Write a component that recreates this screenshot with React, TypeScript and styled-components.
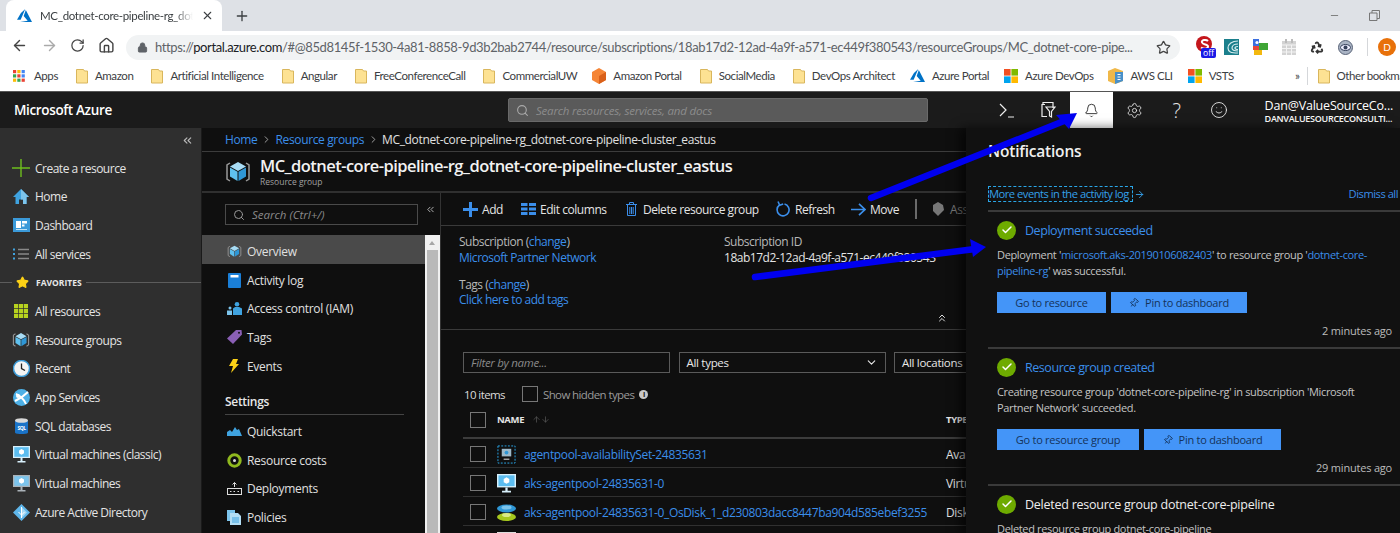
import React from 'react';
import styled, { createGlobalStyle } from 'styled-components';
import {
  ArrowLeft, ArrowRight, RotateCw, Home, Star, Lock, Plus, X, Minus, Search, Bell, Settings, Smile,
  ChevronDown, ChevronsLeft, ChevronsUp, Pin, ChevronRight, Check, ArrowUp, ArrowDown,
} from 'lucide-react';

const GlobalStyle = createGlobalStyle`
  html, body { margin: 0; padding: 0; background: #111; }
  body { font-family: "Open Sans", "Liberation Sans", sans-serif; }
  #root { width: 1400px; height: 533px; overflow: hidden; }
  * { box-sizing: border-box; }
`;

const Page = styled.div`
  width: 1400px;
  height: 533px;
  position: relative;
  overflow: hidden;
  display: flex;
  flex-direction: column;
`;

/* ---------- browser chrome ---------- */

const TabStrip = styled.div`
  height: 31px;
  background: #dee1e6;
  display: flex;
  align-items: flex-end;
  padding-left: 6px;
  color: #5f6368;
  font-family: Lato, sans-serif;
`;

const Tab = styled.div`
  width: 216px;
  height: 31px;
  background: #fff;
  border-radius: 8px 8px 0 0;
  display: flex;
  align-items: center;
  padding: 0 8px 0 11px;
  gap: 8px;
  color: #3c4043;
  font-size: 11.5px;
  letter-spacing: -0.33px;
  & > svg { flex: none; }
`;

const TabTitle = styled.span`
  flex: 1;
  white-space: nowrap;
  overflow: hidden;
  mask-image: linear-gradient(to right, #000 88%, transparent);
`;

const NewTab = styled.div`
  margin-left: 12px;
  height: 31px;
  display: flex;
  align-items: center;
  color: #3c4043;
`;

const WindowControls = styled.div`
  margin-left: auto;
  height: 31px;
  display: flex;
  align-items: center;
  gap: 29px;
  padding-right: 20px;
  color: #777;
`;

const Toolbar = styled.div`
  height: 29px;
  background: #fff;
  display: flex;
  align-items: center;
  color: #5f6368;
  font-family: Lato, sans-serif;
`;

const NavButtons = styled.div`
  width: 126px;
  flex: none;
  padding-left: 11px;
  display: flex;
  align-items: center;
  gap: 12.5px;
`;

const AddressBar = styled.div`
  width: 1054px;
  flex: none;
  height: 25px;
  margin-top: 3px;
  background: #f1f3f4;
  border-radius: 13px;
  display: flex;
  align-items: center;
  padding: 0 9px 0 11px;
  gap: 7px;
  & > svg { flex: none; }
`;

const Url = styled.div`
  flex: 1;
  min-width: 0;
  font-size: 13px;
  letter-spacing: -0.37px;
  white-space: nowrap;
  overflow: hidden;
  color: #5f6368;
  & > b {
    font-weight: 400;
    color: #202124;
  }
`;

const Extensions = styled.div`
  flex: 1;
  display: flex;
  align-items: center;
  padding-left: 15px;
  gap: 14px;
  margin-top: 3px;
  & > svg { flex: none; }
  & > svg:first-child { margin-right: -6px; }
`;

const ExtDivider = styled.div`
  width: 1px;
  height: 18px;
  background: #d5d7da;
`;

const Avatar = styled.div`
  width: 18px;
  height: 18px;
  border-radius: 50%;
  background: #e8710a;
  color: #fff;
  font-size: 10px;
  display: flex;
  align-items: center;
  justify-content: center;
  margin-left: -4px;
  flex: none;
`;

const Bookmarks = styled.div`
  height: 32px;
  background: #fff;
  border-bottom: 1px solid #555;
  display: flex;
  align-items: center;
  padding-left: 13px;
  gap: 15px;
  font-family: Lato, sans-serif;
  font-size: 11.5px;
  letter-spacing: -0.42px;
  color: #3c4043;
`;

const Bookmark = styled.div<{ $gap?: number }>`
  display: flex;
  align-items: center;
  gap: ${(p) => p.$gap || 7}px;
  white-space: nowrap;
  flex: none;
  & > svg { flex: none; }
`;

const BookmarkEnd = styled.div`
  margin-left: auto;
  display: flex;
  align-items: center;
  gap: 7px;
  white-space: nowrap;
  width: 105px;
  overflow: hidden;
  flex: none;
`;

const BookmarkDivider = styled.div`
  width: 1px;
  height: 18px;
  flex: none;
  background: #d5d7da;
`;

const FolderMark = styled.svg`
  margin-left: 3px;
`;

/* ---------- portal header ---------- */

const PortalHeader = styled.header`
  height: 36px;
  background: #1b1b1b;
  color: #fff;
  display: flex;
  align-items: center;
`;

const Brand = styled.div`
  width: 508px;
  padding-left: 14px;
  font-size: 13.5px;
  font-weight: 600;
  letter-spacing: -0.35px;
`;

const GlobalSearch = styled.div`
  width: 420px;
  height: 24px;
  background: #5a5a5a;
  border: 1px solid #6a6a6a;
  border-radius: 2px;
  display: flex;
  align-items: center;
  padding-left: 7px;
  gap: 7px;
  color: #8c8c8c;
  font-size: 11.5px;
  font-style: italic;
  letter-spacing: -0.2px;
`;

const HeaderIcons = styled.div`
  margin-left: 57px;
  display: flex;
`;

const HeaderButton = styled.div<{ $active?: boolean }>`
  width: 42.6px;
  height: 36px;
  display: flex;
  align-items: center;
  justify-content: center;
  background: ${(p) => (p.$active ? '#fff' : 'transparent')};
  color: ${(p) => (p.$active ? '#222' : '#e6e6e6')};
  font-size: 20px;
  font-weight: 300;
`;

const UserBox = styled.div`
  margin-left: 24px;
  padding-top: 2px;
  display: flex;
  flex-direction: column;
  white-space: nowrap;
`;

const UserName = styled.div`
  font-size: 12.5px;
  line-height: 15px;
  letter-spacing: -0.2px;
`;

const UserDir = styled.div`
  font-size: 9px;
  line-height: 12px;
  font-weight: 600;
  letter-spacing: -0.28px;
`;

/* ---------- portal body ---------- */

const PortalBody = styled.div`
  flex: 1;
  min-height: 0;
  display: flex;
  background: #0f0f0f;
`;

const Sidebar = styled.nav`
  width: 202px;
  flex: none;
  background: #2f2f2f;
  color: #e4e4e4;
  border-right: 1px solid #1a1a1a;
`;

const CollapseRow = styled.div`
  height: 25.7px;
  display: flex;
  align-items: center;
  justify-content: flex-end;
  padding-right: 7px;
  color: #bbb;
`;

const NavItem = styled.div`
  height: 28.7px;
  display: flex;
  align-items: center;
  padding-left: 12px;
  gap: 5px;
  font-size: 12px;
  letter-spacing: -0.5px;
  white-space: nowrap;
`;

const NavIcon = styled.span`
  width: 18px;
  height: 18px;
  flex: none;
  display: flex;
  align-items: center;
  justify-content: center;
`;

const FavRow = styled.div`
  height: 28.7px;
  display: flex;
  align-items: center;
  gap: 4px;
  font-size: 8.5px;
  font-weight: 700;
  letter-spacing: 0;
  color: #e8e8e8;
  & > span:nth-of-type(2) { margin-left: 3px; }
`;

const FavLine = styled.span<{ $w?: number }>`
  height: 1px;
  background: #5c5c5c;
  ${(p) => (p.$w ? `width: ${p.$w}px;` : 'flex: 1;')}
`;

const Main = styled.main`
  flex: 1;
  min-width: 0;
  display: flex;
  flex-direction: column;
  overflow: hidden;
`;

const Breadcrumb = styled.div`
  height: 24px;
  flex: none;
  display: flex;
  align-items: center;
  padding-left: 23px;
  gap: 3.5px;
  font-size: 12px;
  letter-spacing: -0.36px;
  white-space: nowrap;
  color: #e0e0e0;
  border-bottom: 1px solid #3c3c3c;
  & > a { color: #3b8eea; }
  & > svg { color: #aaa; flex: none; }
`;

const ResourceHeader = styled.div`
  height: 41px;
  flex: none;
  display: flex;
  align-items: center;
  padding-left: 23px;
  gap: 9px;
  border-bottom: 2px solid #303030;
`;

const ResourceTitle = styled.div`
  font-size: 16.5px;
  line-height: 20px;
  font-weight: 600;
  letter-spacing: -0.54px;
  color: #f2f2f2;
  white-space: nowrap;
`;

const ResourceSub = styled.div`
  font-size: 8.5px;
  line-height: 11px;
  color: #a0a0a0;
`;

const BladeRow = styled.div`
  flex: 1;
  min-height: 0;
  display: flex;
`;

const BladeMenu = styled.div`
  width: 239px;
  flex: none;
  display: flex;
  flex-direction: column;
  border-right: 1px solid #333;
`;

const BladeSearchRow = styled.div`
  height: 42px;
  flex: none;
  display: flex;
  align-items: flex-start;
  padding: 11px 0 0 23px;
  gap: 7px;
  color: #bbb;
`;

const BladeSearch = styled.div`
  width: 193px;
  height: 21px;
  border: 1px solid #4a4a4a;
  display: flex;
  align-items: center;
  padding-left: 7px;
  gap: 7px;
  font-size: 11.5px;
  font-style: italic;
  letter-spacing: 0;
  color: #8a8a8a;
`;

const BladeScrollArea = styled.div`
  flex: 1;
  min-height: 0;
  display: flex;
`;

const BladeList = styled.div`
  width: 223px;
  flex: none;
`;

const Scrollbar = styled.div`
  flex: 1;
  background: #f0f0f0;
  padding: 15px 2px 0 2px;
  position: relative;
  &::before {
    content: '';
    position: absolute;
    left: 4px;
    top: 6px;
    border: 3.5px solid transparent;
    border-top: 0;
    border-bottom: 4px solid #a6a6a6;
  }
  & > div {
    height: 100%;
    background: #b9b9b9;
  }
`;

const BladeItem = styled.div<{ $selected?: boolean }>`
  height: 28.7px;
  display: flex;
  align-items: center;
  padding: 4px 0 0 23px;
  gap: 4px;
  font-size: 12px;
  letter-spacing: -0.3px;
  color: #e0e0e0;
  background: ${(p) => (p.$selected ? '#4a4a4a' : 'transparent')};
`;

const BladeHeading = styled.div`
  height: 29.7px;
  margin: 7px 21px 0 23px;
  display: flex;
  align-items: center;
  font-size: 12px;
  font-weight: 600;
  letter-spacing: -0.3px;
  color: #e8e8e8;
  border-bottom: 1px solid #444;
  padding-top: 3px;
`;

const Content = styled.div`
  flex: 1;
  min-width: 0;
  display: flex;
  flex-direction: column;
  overflow: hidden;
`;

const CommandBar = styled.div`
  height: 33px;
  flex: none;
  display: flex;
  align-items: center;
  padding-left: 22px;
  border-bottom: 1px solid #3a3a3a;
  white-space: nowrap;
`;

const Command = styled.div<{ $w: number; $muted?: boolean; $gap?: number }>`
  width: ${(p) => p.$w}px;
  flex: none;
  display: flex;
  align-items: center;
  gap: ${(p) => p.$gap || 4}px;
  font-size: 12px;
  letter-spacing: -0.45px;
  color: ${(p) => (p.$muted ? '#777' : '#e4e4e4')};
  & > svg { flex: none; }
`;

const CommandSep = styled.div`
  width: 2px;
  height: 20px;
  background: #6a6a6a;
  margin-right: 15px;
  flex: none;
`;

const Essentials = styled.div`
  height: 104px;
  flex: none;
  padding: 8px 0 0 18px;
  border-bottom: 1px solid #3a3a3a;
  position: relative;
  display: grid;
  grid-template-columns: 265px 1fr;
  grid-template-rows: 42.5px auto;
  font-size: 12px;
  line-height: 15.5px;
  letter-spacing: -0.48px;
  color: #b8b8b8;
  & a { color: #3b8eea; }
  & strong { font-weight: 400; color: #e4e4e4; white-space: nowrap; }
`;

const EssentialsToggle = styled.div`
  position: absolute;
  right: 18px;
  bottom: 2px;
  color: #ddd;
`;

const FilterRow = styled.div`
  margin: 22px 0 0 22px;
  display: flex;
  gap: 8.5px;
  flex: none;
`;

const FilterBox = styled.div<{ $italic?: boolean }>`
  width: 207px;
  height: 21px;
  flex: none;
  border: 1px solid #5a5a5a;
  display: flex;
  align-items: center;
  justify-content: space-between;
  padding: 0 7px;
  font-size: 11.5px;
  letter-spacing: -0.3px;
  font-style: ${(p) => (p.$italic ? 'italic' : 'normal')};
  color: ${(p) => (p.$italic ? '#8a8a8a' : '#e8e8e8')};
`;

const CountRow = styled.div`
  margin: 12px 0 0 23px;
  height: 18px;
  flex: none;
  display: flex;
  align-items: center;
  font-size: 11.5px;
  letter-spacing: -0.6px;
  color: #dcdcdc;
`;

const Box = styled.span<{ $size?: number }>`
  width: ${(p) => p.$size || 16}px;
  height: ${(p) => p.$size || 16}px;
  flex: none;
  display: block;
  border: 1px solid #777;
`;

const HiddenTypes = styled.div`
  margin-left: 17px;
  display: flex;
  align-items: center;
  gap: 5px;
  color: #9a9a9a;
`;

const InfoDot = styled.span`
  width: 9px;
  height: 9px;
  border-radius: 50%;
  background: #c8c8c8;
  color: #111;
  font-size: 7.5px;
  font-weight: 700;
  line-height: 9px;
  text-align: center;
`;

const Table = styled.div`
  margin: 1px 0 0 22px;
  flex: none;
`;

const TableRow = styled.div<{ $head?: boolean }>`
  height: ${(p) => (p.$head ? 35 : 29)}px;
  display: grid;
  grid-template-columns: 27px 449px 60px;
  align-items: center;
  padding: ${(p) => (p.$head ? '0 0 2px 7px' : '2px 0 0 7px')};
  border-bottom: 1px solid ${(p) => (p.$head ? '#3c3c3c' : '#303030')};
  border-bottom-width: ${(p) => (p.$head ? 2 : 1)}px;
  font-size: 12px;
  letter-spacing: -0.35px;
  color: #e0e0e0;
  white-space: nowrap;
`;

const HeadCell = styled.div`
  display: flex;
  align-items: center;
  gap: 8px;
  font-size: 9.5px;
  font-weight: 700;
  color: #e4e4e4;
`;

const SortArrows = styled.span`
  display: flex;
`;

const NameCell = styled.div`
  display: flex;
  align-items: center;
  gap: 8px;
  color: #3b8eea;
  & > svg { flex: none; }
`;

/* ---------- notifications ---------- */

const NotificationPanel = styled.aside`
  width: 434px;
  flex: none;
  background: #111;
  box-shadow: -6px 0 10px rgba(0, 0, 0, 0.6);
  padding-left: 22px;
  position: relative;
  overflow: hidden;
`;

const PanelTitle = styled.h2`
  margin: 0;
  height: 46px;
  display: flex;
  align-items: center;
  font-size: 15.5px;
  font-weight: 600;
  letter-spacing: -0.2px;
  color: #f0f0f0;
`;

const PanelLinks = styled.div`
  margin-top: 12px;
  height: 24px;
  display: flex;
  align-items: flex-start;
  justify-content: space-between;
  font-size: 11.2px;
  letter-spacing: -0.5px;
  color: #3b8eea;
`;

const ActivityLink = styled.div`
  display: flex;
  align-items: center;
  color: #34a0ea;
  gap: 1px;
  & > span {
    border: 1px dashed #2aa6e8;
    height: 16px;
    width: 145px;
    line-height: 14px;
    white-space: nowrap;
  }
`;

const PanelDismiss = styled.span`
  padding-right: 2px;
  line-height: 16px;
  white-space: nowrap;
`;

const Notice = styled.div<{ $last?: boolean }>`
  height: ${(p) => (p.$last ? 60 : 137)}px;
  border-top: 2px solid #3a3a3a;
  padding: 9px 8px 0 9px;
`;

const NoticeHead = styled.div<{ $plain?: boolean }>`
  height: 18px;
  display: flex;
  align-items: center;
  gap: 9px;
  font-size: 12.5px;
  letter-spacing: ${(p) => (p.$plain ? -0.25 : -0.45)}px;
  color: ${(p) => (p.$plain ? '#eee' : '#3b8eea')};
  white-space: nowrap;
`;

const GreenTick = styled.span`
  width: 19px;
  height: 19px;
  flex: none;
  border-radius: 50%;
  background: #6eab00;
  color: #fff;
  display: flex;
  align-items: center;
  justify-content: center;
`;

const NoticeBody = styled.div`
  margin-top: 8px;
  font-size: 11px;
  line-height: 16px;
  letter-spacing: -0.34px;
  color: #c4c4c4;
  white-space: nowrap;
  & > a { color: #3b8eea; }
`;

const NoticeActions = styled.div`
  margin-top: 13px;
  display: flex;
  gap: 5px;
`;

const ActionButton = styled.div<{ $w: number }>`
  width: ${(p) => p.$w}px;
  height: 21px;
  background: #4495f8;
  color: #14335a;
  font-size: 11px;
  letter-spacing: -0.25px;
  display: flex;
  align-items: center;
  justify-content: center;
  gap: 6px;
  white-space: nowrap;
  & > svg { transform: rotate(40deg); }
`;

const NoticeTime = styled.div`
  margin-top: 10px;
  text-align: right;
  font-size: 11px;
  line-height: 16px;
  letter-spacing: -0.2px;
  color: #bcbcbc;
`;

const ArrowLayer = styled.svg`
  position: absolute;
  left: 0;
  top: 0;
  pointer-events: none;
`;

/* ---------- drawn icons ---------- */

const Folder = () => (
  <FolderMark width="12" height="16" viewBox="0 0 12 16">
    <path d="M.5 1.500h7l1 1.500h3v12H.5z" fill="#fde293" stroke="#d9b65c" />
  </FolderMark>
);

const AzureA = ({ size = 15 }: { size?: number }) => (
  <svg width={size} height={size} viewBox="0 0 16 16">
    <path d="M8.800 1 4.200 5.200 0 12.600h3.900zM9.400 2 7.100 8.400l4.300 5.100-8.100 1.300H16z" fill="#0072c6" />
  </svg>
);

const MsTiles = ({ c = ['#f25022', '#7fba00', '#00a4ef', '#ffb900'] }: { c?: string[] }) => (
  <svg width="14" height="14" viewBox="0 0 14 14">
    <rect width="6.600" height="6.600" fill={c[0]} />
    <rect x="7.400" width="6.600" height="6.600" fill={c[1]} />
    <rect y="7.400" width="6.600" height="6.600" fill={c[2]} />
    <rect x="7.400" y="7.400" width="6.600" height="6.600" fill={c[3]} />
  </svg>
);

const AppsGrid = () => {
  const colors = ['#ea4335', '#fbbc05', '#4285f4', '#34a853', '#ea4335', '#4285f4', '#fbbc05', '#34a853', '#ea4335'];
  return (
    <svg width="12" height="12" viewBox="0 0 12 12">
      {colors.map((c, i) => (
        <rect key={i} x={(i % 3) * 4.3} y={Math.floor(i / 3) * 4.3} width="3.200" height="3.200" fill={c} />
      ))}
    </svg>
  );
};

const OrangeCube = () => (
  <svg width="14" height="16" viewBox="0 0 14 16">
    <path d="M7 0l7 4v8l-7 4-7-4V4z" fill="#f58536" />
    <path d="M7 8l7-4v8l-7 4z" fill="#d9601a" />
  </svg>
);

const AwsBox = () => (
  <svg width="15" height="16" viewBox="0 0 15 16">
    <path d="M0 3l7-3 8 3v10l-8 3-7-3z" fill="#f0b849" />
    <path d="M7 4h8v9l-8 3z" fill="#4a90c8" />
    <path d="M9.500 6.500h3M9.500 9h3M9.500 11.500h3" stroke="#fff" />
  </svg>
);

const SOffIcon = () => (
  <svg width="21" height="22" viewBox="0 0 21 22">
    <circle cx="9" cy="8" r="8" fill="#c4161c" />
    <path d="M13 5c-2-2-7-1-6 1.500s6 1.500 6 4-4 3-7 1" fill="none" stroke="#fff" strokeWidth="2" />
    <rect x="6" y="12" width="15" height="10" rx="2" fill="#1a1ae6" />
    <text x="13.500" y="20" fontSize="8.500" fill="#fff" textAnchor="middle" fontFamily="Open Sans">off</text>
  </svg>
);

const WaveIcon = () => (
  <svg width="15" height="16" viewBox="0 0 15 16">
    <rect width="15" height="16" fill="#1b7f8c" />
    <path d="M14 2C8 2 4 5 4 9s3 5 10 5M14 5c-4 0-6 2-6 4s2 3 6 3M14 7.500c-2 0-3 .5-3 1.500s1 1.500 3 1.500" fill="none" stroke="#d8eef0" strokeWidth="1.200" />
  </svg>
);

const GoogleMark = () => (
  <svg width="15" height="16" viewBox="0 0 15 16">
    <rect x="0" y="0" width="6" height="7" fill="#3b6fe0" />
    <rect x="6" y="4" width="9" height="7" fill="#3fa535" />
    <rect x="0" y="7" width="6" height="4" fill="#e8473a" />
    <rect x="1" y="11" width="8" height="5" fill="#f3b80f" />
    <circle cx="4" cy="3.500" r="1.600" fill="#fff" />
  </svg>
);

const CalendarGrey = () => (
  <svg width="14" height="16" viewBox="0 0 14 16">
    <rect y="2" width="14" height="14" fill="#d3d3d3" />
    <rect x="3" y="0" width="2" height="4" fill="#bbb" />
    <rect x="9" y="0" width="2" height="4" fill="#bbb" />
    <path d="M0 6h14M0 9.500h14M0 13h14M4.500 6v10M9.500 6v10" stroke="#f4f4f4" />
  </svg>
);

const RecycleIcon = () => (
  <svg width="14" height="15" viewBox="0 0 24 24" fill="none" stroke="#333" strokeWidth="3">
    <path d="M7 19H4.800a1.800 1.800 0 0 1-1.600-2.700L7.200 9.500M11 19h8.200a1.800 1.800 0 0 0 1.600-2.700l-1.200-2.100M14 16l-3 3 3 3M8.300 13.600 7.200 9.500 3.100 10.600M9.300 5.800l1.100-1.900a1.800 1.800 0 0 1 3.100 0l3.900 6.800M13.400 9.600l4.100 1.100 1.100-4.100" />
  </svg>
);

const EyeCircle = () => (
  <svg width="15" height="15" viewBox="0 0 15 15">
    <circle cx="7.500" cy="7.500" r="7" fill="#aab4c4" stroke="#5a6478" />
    <ellipse cx="7.500" cy="7.500" rx="5" ry="3" fill="#eef" stroke="#34405a" />
    <circle cx="7.500" cy="7.500" r="2" fill="#34405a" />
  </svg>
);

const Cube = ({ size = 18, brackets = true }: { size?: number; brackets?: boolean }) => (
  <svg width={size} height={size} viewBox="0 0 26 26">
    {brackets && <path d="M5 4 2 6v14l3 2M21 4l3 2v14l-3 2" fill="none" stroke="#999" strokeWidth="1.500" />}
    <path d="M13 3l8 4.500-8 4.500-8-4.500z" fill="#a7dcf5" />
    <path d="M5 8.500l7.500 4.300V22L5 17.500z" fill="#5fc0ee" />
    <path d="M21 8.500l-7.500 4.300V22l7.500-4.500z" fill="#2f97d6" />
  </svg>
);

const CreatePlus = () => (
  <svg width="18" height="18" viewBox="0 0 18 18">
    <path d="M9 0v18M0 9h18" stroke="#6ebe1e" strokeWidth="1.400" />
  </svg>
);

const HomeIcon = () => (
  <svg width="16" height="15" viewBox="0 0 16 15">
    <path d="M8 0 0 8h2.500v7h3.500v-4.500h4V15h3.500V8H16z" fill="#3fa3e0" />
    <path d="M8 0l8 8h-2.500v7H10v-4.500H8z" fill="#7cc4ec" />
  </svg>
);

const DashboardIcon = () => (
  <svg width="17" height="14" viewBox="0 0 17 14">
    <rect width="17" height="14" fill="#3b9ad9" />
    <rect x="3" y="3" width="5" height="7" fill="#fff" />
    <rect x="9" y="3" width="5" height="2.500" fill="#fff" />
    <rect x="9" y="6.500" width="2.500" height="2" fill="#fff" />
    <rect x="3" y="11" width="11" height="1" fill="#bfe2f6" />
  </svg>
);

const ServicesIcon = () => (
  <svg width="16" height="12" viewBox="0 0 16 12">
    <path d="M5 1.500h11M5 6h11M5 10.500h11" stroke="#888" strokeWidth="1.500" />
    <path d="M0 1.500h2M0 6h2M0 10.500h2" stroke="#3fa3e0" strokeWidth="2" />
  </svg>
);

const GridIcon = () => (
  <svg width="14" height="14" viewBox="0 0 14 14">
    {[0, 1, 2, 3, 4, 5, 6, 7, 8].map((i) => (
      <rect key={i} x={(i % 3) * 4.9} y={Math.floor(i / 3) * 4.9} width="4.200" height="4.200" fill="#b7d21f" />
    ))}
  </svg>
);

const ClockIcon = () => (
  <svg width="17" height="17" viewBox="0 0 17 17">
    <circle cx="8.500" cy="8.500" r="8" fill="#f4f4f4" stroke="#3c9ad6" strokeWidth="1.500" />
    <path d="M8.500 3.500v5l3.500 2" fill="none" stroke="#222" strokeWidth="1.300" />
  </svg>
);

const AppServiceIcon = () => (
  <svg width="17" height="17" viewBox="0 0 17 17">
    <circle cx="8.500" cy="8.500" r="8.500" fill="#4db0e6" />
    <path d="M2 12C6 10 11 7 15 3M3 5c3 1 8 5 10 10" stroke="#fff" strokeWidth="2" fill="none" />
    <circle cx="5" cy="7" r="2" fill="#fff" />
  </svg>
);

const SqlIcon = () => (
  <svg width="13" height="17" viewBox="0 0 13 17">
    <path d="M0 2.500v12c0 2 13 2 13 0v-12z" fill="#1a73c8" />
    <ellipse cx="6.500" cy="2.500" rx="6.500" ry="2.300" fill="#d9d9d9" />
    <text x="6.500" y="11.500" fontSize="5" fontWeight="700" fill="#fff" textAnchor="middle" fontFamily="Open Sans">SQL</text>
  </svg>
);

const MonitorIcon = ({ tone = '#5cbdf0', frame = '#d8f0fb', size = 17 }: { tone?: string; frame?: string; size?: number }) => (
  <svg width={size} height={size} viewBox="0 0 17 17">
    <rect width="17" height="12" fill={frame} />
    <rect x="1.300" y="1.200" width="14.400" height="9.600" fill={tone} />
    <path d="M8.500 3l2.500 1.400v2.900l-2.500 1.400-2.500-1.400V4.400z" fill="#fff" />
    <path d="M7.500 12h2v3h-2zM4.500 15h8v1.500h-8z" fill={frame} />
  </svg>
);

const AadIcon = () => (
  <svg width="17" height="17" viewBox="0 0 17 17">
    <path d="M8.500 0 17 8.500 8.500 17 0 8.500z" fill="#5fb6ea" />
    <path d="M8.500 3 14 8.500 8.500 14z" fill="#a6d9f5" />
    <path d="M8.500 3v11M5.500 8l3 3 3-3" stroke="#fff" fill="none" />
  </svg>
);

const BookIcon = () => (
  <svg width="13" height="15" viewBox="0 0 13 15">
    <rect width="13" height="15" rx="1" fill="#1a7fd8" />
    <rect x="2.500" y="2" width="8" height="2.500" fill="#fff" />
  </svg>
);

const IamIcon = () => (
  <svg width="15" height="13" viewBox="0 0 15 13">
    <circle cx="10" cy="2.300" r="2.300" fill="#3fa3e0" />
    <path d="M6 13V6.500L8 5h4l3 1.500V13z" fill="#3fa3e0" />
    <circle cx="3" cy="6" r="1.500" fill="#7cc4ec" />
    <path d="M0 13V8.500h5V13z" fill="#7cc4ec" />
  </svg>
);

const TagIcon = () => (
  <svg width="15" height="14" viewBox="0 0 15 14">
    <path d="M9 0h5.500L15 4.500 6 14 0 8.500z" fill="#8a5fb5" />
    <circle cx="12" cy="2.800" r="1" fill="#111" />
  </svg>
);

const BoltIcon = () => (
  <svg width="10" height="14" viewBox="0 0 10 14">
    <path d="M4 0h5L7 5h3L2 14l2-7H0z" fill="#fcd116" />
  </svg>
);

const QuickstartIcon = () => (
  <svg width="15" height="9" viewBox="0 0 15 9">
    <path d="M0 9V5l3-2 2 2 3-5 2 3 2-1 3 7z" fill="#3fa3e0" />
  </svg>
);

const CostIcon = () => (
  <svg width="15" height="15" viewBox="0 0 15 15">
    <circle cx="7.500" cy="7.500" r="5.700" fill="none" stroke="#8fb81e" strokeWidth="3" />
    <circle cx="7.500" cy="7.500" r="1.500" fill="#ddd" />
  </svg>
);

const DeployIcon = () => (
  <svg width="15" height="13" viewBox="0 0 15 13" fill="none" stroke="#ddd">
    <rect x=".5" y="6.500" width="14" height="6" />
    <path d="M7.500 5V0.500M5.500 2.500l2-2 2 2M3 9.500h1.500M6.500 9.500H8M10.500 9.500H12" />
  </svg>
);

const PolicyIcon = () => (
  <svg width="14" height="15" viewBox="0 0 14 15">
    <path d="M0 0h8v11H0z" fill="#7cc4ec" />
    <path d="M3 3h8l3 3v9H3z" fill="#b4def5" />
    <path d="M5 8h7M5 10h7M5 12h7" stroke="#3fa3e0" />
  </svg>
);

const AddIcon = () => (
  <svg width="15" height="15" viewBox="0 0 15 15">
    <path d="M7.500 0v15M0 7.500h15" stroke="#3b8eea" strokeWidth="3" />
  </svg>
);

const ColumnsIcon = () => (
  <svg width="15" height="12" viewBox="0 0 15 12" fill="#3b8eea">
    <rect width="6.500" height="3" />
    <rect x="8" width="7" height="3" />
    <rect y="4.500" width="6.500" height="3" />
    <rect x="8" y="4.500" width="7" height="3" />
    <rect y="9" width="6.500" height="3" />
    <rect x="8" y="9" width="7" height="3" />
  </svg>
);

const TrashIcon = () => (
  <svg width="11" height="14" viewBox="0 0 11 14" fill="none" stroke="#3b8eea">
    <path d="M0 2.500h11M3.500 2.500V.5h4v2M1.500 2.500v11h8v-11M3.800 5v7M5.500 5v7M7.200 5v7" />
  </svg>
);

const RefreshIcon = () => (
  <svg width="14" height="16" viewBox="0 0 14 16" fill="none" stroke="#3b8eea" strokeWidth="1.600">
    <path d="M3.500 4a6 6 0 1 0 5 -1M2 .5l1.700 3.800 3.500-1.200" />
  </svg>
);

const MoveIcon = () => (
  <svg width="15" height="13" viewBox="0 0 15 13" fill="none" stroke="#3b8eea" strokeWidth="1.700">
    <path d="M0 6.500h14M8 .8l6 5.700-6 5.700" />
  </svg>
);

const TagMuted = () => (
  <svg width="12" height="14" viewBox="0 0 12 14">
    <path d="M6 0l5 3 1 5-6 6-5-5 0-6z" fill="#777" />
  </svg>
);

const ShellIcon = () => (
  <svg width="15" height="15" viewBox="0 0 15 15" fill="none" stroke="#eee" strokeWidth="1.200">
    <path d="M1 1l6 6-6 6M9 14h6" />
  </svg>
);

const FilterDocIcon = () => (
  <svg width="15" height="18" viewBox="0 0 15 18" fill="none" stroke="#eee" strokeWidth="1.200">
    <path d="M2 4V1.500h10V7M4 3.500H1v12h5M5 6h9l-3.500 4.500V16l-2-1v-4.500z" />
  </svg>
);

const SetIcon = () => (
  <svg width="19" height="19" viewBox="0 0 20 20">
    <rect x="1" y="1" width="18" height="18" fill="none" stroke="#2aa6e8" strokeDasharray="2 1.500" />
    <rect x="5" y="4" width="10" height="8" fill="#9db9c9" />
    <circle cx="10" cy="8" r="2" fill="#2f97d6" />
    <path d="M7 15h6" stroke="#aaa" strokeWidth="1.500" />
  </svg>
);

const DiskIcon = () => (
  <svg width="19" height="19" viewBox="0 0 19 19">
    <ellipse cx="9.500" cy="14" rx="9.500" ry="4" fill="#a6c81e" />
    <ellipse cx="9.500" cy="12" rx="4.500" ry="2" fill="#d9e98a" />
    <ellipse cx="9.500" cy="5.500" rx="9.500" ry="4" fill="#2f97d6" />
    <ellipse cx="9.500" cy="4.500" rx="5" ry="2" fill="#7cc4ec" />
  </svg>
);

const BlueArrow = ({ d, head }: { d: string; head: string }) => (
  <>
    <path d={d} stroke="#0000f0" strokeWidth="6.500" strokeLinecap="round" fill="none" />
    <polygon points={head} fill="#0000f0" />
  </>
);

const NavLine = ({ icon, label }: { icon: React.ReactNode; label: string }) => (
  <NavItem>
    <NavIcon>{icon}</NavIcon>
    {label}
  </NavItem>
);

const MenuLine = ({ icon, label, selected }: { icon: React.ReactNode; label: string; selected?: boolean }) => (
  <BladeItem $selected={selected}>
    <NavIcon>{icon}</NavIcon>
    {label}
  </BladeItem>
);

const Row = ({ icon, name, type }: { icon: React.ReactNode; name?: string; type?: string }) => (
  <TableRow>
    <Box />
    <NameCell>
      {icon}
      {name}
    </NameCell>
    <span>{type}</span>
  </TableRow>
);

export default function App() {
  return (
    <Page>
      <GlobalStyle />

      <TabStrip>
        <Tab>
          <AzureA />
          <TabTitle>MC_dotnet-core-pipeline-rg_dot</TabTitle>
          <X size={13} />
        </Tab>
        <NewTab>
          <Plus size={16} />
        </NewTab>
        <WindowControls>
          <Minus size={11} />
          <svg width="11" height="11" viewBox="0 0 11 11" fill="none" stroke="#777">
            <path d="M3 3V.5h7.500v8H8M.5 3h7.500v7.500H.5z" />
          </svg>
        </WindowControls>
      </TabStrip>

      <Toolbar>
        <NavButtons>
          <ArrowLeft size={17} color="#444" />
          <ArrowRight size={17} color="#aaa" />
          <RotateCw size={15} color="#444" />
          <Home size={17} color="#444" />
        </NavButtons>
        <AddressBar>
          <Lock size={11} fill="#5f6368" />
          <Url>
            https://<b>portal.azure.com</b>/#@85d8145f-1530-4a81-8858-9d3b2bab2744/resource/subscriptions/18ab17d2-12ad-4a9f-a571-ec449f380543/resourceGroups/MC_dotnet-core-pipe...
          </Url>
          <Star size={15} color="#444" />
        </AddressBar>
        <Extensions>
          <SOffIcon />
          <WaveIcon />
          <GoogleMark />
          <CalendarGrey />
          <RecycleIcon />
          <EyeCircle />
          <ExtDivider />
          <Avatar>D</Avatar>
        </Extensions>
      </Toolbar>

      <Bookmarks>
        <Bookmark $gap={9}><AppsGrid />Apps</Bookmark>
        <Bookmark><Folder />Amazon</Bookmark>
        <Bookmark><Folder />Artificial Intelligence</Bookmark>
        <Bookmark><Folder />Angular</Bookmark>
        <Bookmark><Folder />FreeConferenceCall</Bookmark>
        <Bookmark><Folder />CommercialUW</Bookmark>
        <Bookmark><OrangeCube />Amazon Portal</Bookmark>
        <Bookmark><Folder />SocialMedia</Bookmark>
        <Bookmark><Folder />DevOps Architect</Bookmark>
        <Bookmark><AzureA />Azure Portal</Bookmark>
        <Bookmark><MsTiles />Azure DevOps</Bookmark>
        <Bookmark><AwsBox />AWS CLI</Bookmark>
        <Bookmark><MsTiles />VSTS</Bookmark>
        <BookmarkEnd>
          <span>»</span>
          <BookmarkDivider />
          <Bookmark><Folder />Other bookmarks</Bookmark>
        </BookmarkEnd>
      </Bookmarks>

      <PortalHeader>
        <Brand>Microsoft Azure</Brand>
        <GlobalSearch>
          <Search size={13} color="#aaa" />
          Search resources, services, and docs
        </GlobalSearch>
        <HeaderIcons>
          <HeaderButton><ShellIcon /></HeaderButton>
          <HeaderButton><FilterDocIcon /></HeaderButton>
          <HeaderButton $active><Bell size={15} strokeWidth={1.4} /></HeaderButton>
          <HeaderButton><Settings size={17} strokeWidth={1.2} /></HeaderButton>
          <HeaderButton>?</HeaderButton>
          <HeaderButton><Smile size={18} strokeWidth={1.2} /></HeaderButton>
        </HeaderIcons>
        <UserBox>
          <UserName>Dan@ValueSourceCo...</UserName>
          <UserDir>DANVALUESOURCECONSULTI...</UserDir>
        </UserBox>
      </PortalHeader>

      <PortalBody>
        <Sidebar>
          <CollapseRow><ChevronsLeft size={13} /></CollapseRow>
          <NavLine icon={<CreatePlus />} label="Create a resource" />
          <NavLine icon={<HomeIcon />} label="Home" />
          <NavLine icon={<DashboardIcon />} label="Dashboard" />
          <NavLine icon={<ServicesIcon />} label="All services" />
          <FavRow>
            <FavLine $w={12} />
            <Star size={13} fill="#fcd116" color="#fcd116" />
            <span>FAVORITES</span>
            <FavLine />
          </FavRow>
          <NavLine icon={<GridIcon />} label="All resources" />
          <NavLine icon={<Cube />} label="Resource groups" />
          <NavLine icon={<ClockIcon />} label="Recent" />
          <NavLine icon={<AppServiceIcon />} label="App Services" />
          <NavLine icon={<SqlIcon />} label="SQL databases" />
          <NavLine icon={<MonitorIcon />} label="Virtual machines (classic)" />
          <NavLine icon={<MonitorIcon tone="#7cc4ec" frame="#aab2b8" />} label="Virtual machines" />
          <NavLine icon={<AadIcon />} label="Azure Active Directory" />
        </Sidebar>

        <Main>
          <Breadcrumb>
            <a>Home</a>
            <ChevronRight size={11} />
            <a>Resource groups</a>
            <ChevronRight size={11} />
            <span>MC_dotnet-core-pipeline-rg_dotnet-core-pipeline-cluster_eastus</span>
          </Breadcrumb>
          <ResourceHeader>
            <Cube size={26} />
            <div>
              <ResourceTitle>MC_dotnet-core-pipeline-rg_dotnet-core-pipeline-cluster_eastus</ResourceTitle>
              <ResourceSub>Resource group</ResourceSub>
            </div>
          </ResourceHeader>
          <BladeRow>
            <BladeMenu>
              <BladeSearchRow>
                <BladeSearch>
                  <Search size={12} color="#999" />
                  Search (Ctrl+/)
                </BladeSearch>
                <ChevronsLeft size={11} />
              </BladeSearchRow>
              <BladeScrollArea>
                <BladeList>
                  <MenuLine selected icon={<Cube size={15} />} label="Overview" />
                  <MenuLine icon={<BookIcon />} label="Activity log" />
                  <MenuLine icon={<IamIcon />} label="Access control (IAM)" />
                  <MenuLine icon={<TagIcon />} label="Tags" />
                  <MenuLine icon={<BoltIcon />} label="Events" />
                  <BladeHeading>Settings</BladeHeading>
                  <MenuLine icon={<QuickstartIcon />} label="Quickstart" />
                  <MenuLine icon={<CostIcon />} label="Resource costs" />
                  <MenuLine icon={<DeployIcon />} label="Deployments" />
                  <MenuLine icon={<PolicyIcon />} label="Policies" />
                </BladeList>
                <Scrollbar><div /></Scrollbar>
              </BladeScrollArea>
            </BladeMenu>

            <Content>
              <CommandBar>
                <Command $w={58}><AddIcon />Add</Command>
                <Command $w={105}><ColumnsIcon />Edit columns</Command>
                <Command $w={150} $gap={6}><TrashIcon />Delete resource group</Command>
                <Command $w={75} $gap={5}><RefreshIcon />Refresh</Command>
                <Command $w={64}><MoveIcon />Move</Command>
                <CommandSep />
                <Command $w={100} $muted $gap={6}><TagMuted />Assign tags</Command>
              </CommandBar>

              <Essentials>
                <div>
                  Subscription (<a>change</a>)<br />
                  <a>Microsoft Partner Network</a>
                </div>
                <div>
                  Subscription ID<br />
                  <strong>18ab17d2-12ad-4a9f-a571-ec449f380543</strong>
                </div>
                <div>
                  Tags (<a>change</a>)<br />
                  <a>Click here to add tags</a>
                </div>
                <EssentialsToggle><ChevronsUp size={12} /></EssentialsToggle>
              </Essentials>

              <FilterRow>
                <FilterBox $italic>Filter by name...</FilterBox>
                <FilterBox>All types<ChevronDown size={13} /></FilterBox>
                <FilterBox>All locations<ChevronDown size={13} /></FilterBox>
              </FilterRow>

              <CountRow>
                10 items
                <HiddenTypes>
                  <Box />
                  Show hidden types
                  <InfoDot>i</InfoDot>
                </HiddenTypes>
              </CountRow>

              <Table>
                <TableRow $head>
                  <Box />
                  <HeadCell>
                    NAME
                    <SortArrows>
                      <ArrowUp size={9} color="#555" />
                      <ArrowDown size={9} color="#555" />
                    </SortArrows>
                  </HeadCell>
                  <HeadCell>TYPE</HeadCell>
                </TableRow>
                <Row icon={<SetIcon />} name="agentpool-availabilitySet-24835631" type="Availability set" />
                <Row icon={<MonitorIcon size={19} />} name="aks-agentpool-24835631-0" type="Virtual machine" />
                <Row icon={<DiskIcon />} name="aks-agentpool-24835631-0_OsDisk_1_d230803dacc8447ba904d585ebef3255" type="Disk" />
                <Row icon={<MonitorIcon size={19} tone="#ccc" frame="#ddd" />} />
              </Table>
            </Content>
          </BladeRow>
        </Main>

        <NotificationPanel>
          <PanelTitle>Notifications</PanelTitle>
          <PanelLinks>
            <ActivityLink>
              <span>More events in the activity log</span>
              <ArrowRight size={11} />
            </ActivityLink>
            <PanelDismiss>Dismiss all</PanelDismiss>
          </PanelLinks>

          <Notice>
            <NoticeHead>
              <GreenTick><Check size={12} strokeWidth={3} /></GreenTick>
              Deployment succeeded
            </NoticeHead>
            <NoticeBody>
              Deployment '<a>microsoft.aks-20190106082403</a>' to resource group '<a>dotnet-core-</a>
              <br />
              <a>pipeline-rg</a>' was successful.
            </NoticeBody>
            <NoticeActions>
              <ActionButton $w={109}>Go to resource</ActionButton>
              <ActionButton $w={136}><Pin size={10} />Pin to dashboard</ActionButton>
            </NoticeActions>
            <NoticeTime>2 minutes ago</NoticeTime>
          </Notice>

          <Notice>
            <NoticeHead>
              <GreenTick><Check size={12} strokeWidth={3} /></GreenTick>
              Resource group created
            </NoticeHead>
            <NoticeBody>
              Creating resource group 'dotnet-core-pipeline-rg' in subscription 'Microsoft
              <br />
              Partner Network' succeeded.
            </NoticeBody>
            <NoticeActions>
              <ActionButton $w={142}>Go to resource group</ActionButton>
              <ActionButton $w={137}><Pin size={10} />Pin to dashboard</ActionButton>
            </NoticeActions>
            <NoticeTime>29 minutes ago</NoticeTime>
          </Notice>

          <Notice $last>
            <NoticeHead $plain>
              <GreenTick><Check size={12} strokeWidth={3} /></GreenTick>
              Deleted resource group dotnet-core-pipeline
            </NoticeHead>
            <NoticeBody>Deleted resource group dotnet-core-pipeline</NoticeBody>
          </Notice>
        </NotificationPanel>
      </PortalBody>

      <ArrowLayer width="1400" height="533" viewBox="0 0 1400 533">
        <BlueArrow d="M871 198 L1064 121" head="1077,113 1056,115 1069,129" />
        <BlueArrow d="M755 277 L975 249" head="986,247 970,239 973,257" />
      </ArrowLayer>
    </Page>
  );
}
